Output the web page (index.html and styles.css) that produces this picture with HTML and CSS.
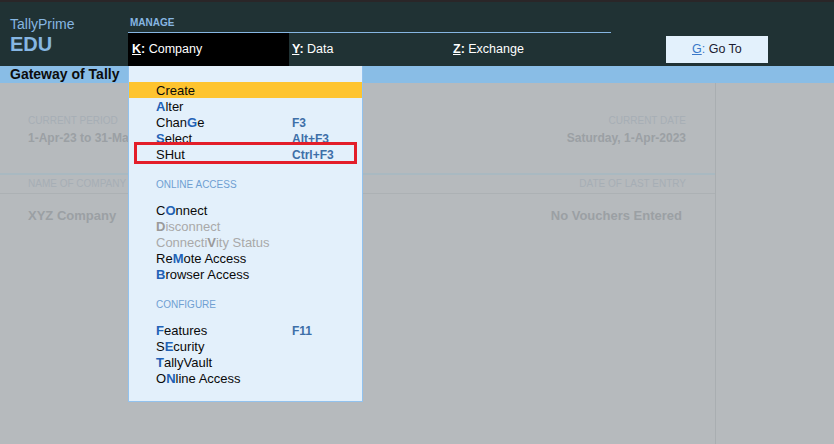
FILE: index.html
```html
<!DOCTYPE html>
<html lang="en">
<head>
    <meta charset="UTF-8">
    <meta name="viewport" content="width=device-width, initial-scale=1.0">
    <title>TallyPrime EDU - Gateway of Tally</title>
    <link rel="stylesheet" href="styles.css">
</head>
<body>
    <div class="top-strip"></div>

    <header class="topbar">
        <div class="brand">
            <div class="product">TallyPrime</div>
            <div class="edition">EDU</div>
        </div>
        <nav class="menubar">
            <div class="menu-title">MANAGE</div>
            <div class="tabs">
                <div class="tab active"><b><u>K</u>:</b> Company</div>
                <div class="tab"><b><u>Y</u>:</b> Data</div>
                <div class="tab"><b><u>Z</u>:</b> Exchange</div>
            </div>
        </nav>
        <div class="goto"><span class="goto-key"><u>G</u>:</span> Go To</div>
    </header>

    <div class="titlebar">Gateway of Tally</div>

    <main class="workspace">
        <section class="gateway">
            <div class="info-row">
                <div class="field">
                    <div class="label">CURRENT PERIOD</div>
                    <div class="value">1-Apr-23 to 31-Mar-24</div>
                </div>
                <div class="field right">
                    <div class="label">CURRENT DATE</div>
                    <div class="value">Saturday, 1-Apr-2023</div>
                </div>
            </div>
            <div class="info-head">
                <div class="label">NAME OF COMPANY</div>
                <div class="label">DATE OF LAST ENTRY</div>
            </div>
            <div class="info-body">
                <div class="value big">XYZ Company</div>
                <div class="value big">No Vouchers Entered</div>
            </div>
        </section>
        <aside class="side"></aside>
    </main>

    <div class="dropdown">
        <div class="item selected"><span>Create</span><span></span></div>
        <div class="item"><span><b class="k">A</b>lter</span><span></span></div>
        <div class="item"><span>Chan<b class="k">G</b>e</span><span class="sc">F3</span></div>
        <div class="item"><span><b class="k">S</b>elect</span><span class="sc">Alt+F3</span></div>
        <div class="item"><span>SHut</span><span class="sc">Ctrl+F3</span></div>

        <div class="group">ONLINE ACCESS</div>
        <div class="item"><span>C<b class="k">O</b>nnect</span><span></span></div>
        <div class="item disabled"><span><b class="k">D</b>isconnect</span><span></span></div>
        <div class="item disabled"><span>Connecti<b class="k">V</b>ity Status</span><span></span></div>
        <div class="item"><span>Re<b class="k">M</b>ote Access</span><span></span></div>
        <div class="item"><span><b class="k">B</b>rowser Access</span><span></span></div>

        <div class="group">CONFIGURE</div>
        <div class="item"><span><b class="k">F</b>eatures</span><span class="sc">F11</span></div>
        <div class="item"><span>S<b class="k">E</b>curity</span><span></span></div>
        <div class="item"><span><b class="k">T</b>allyVault</span><span></span></div>
        <div class="item"><span>O<b class="k">N</b>line Access</span><span></span></div>

        <div class="mark"></div>
    </div>
</body>
</html>
```

FILE: styles.css
```css
body {
    font-family: "Liberation Sans", Arial, sans-serif;
    margin: 0;
    padding: 0;
    width: 834px;
    height: 444px;
    overflow: hidden;
    background-color: #b6babd;
    position: relative;
}
.top-strip {
    height: 2px;
    background-color: #2a2628;
}
.topbar {
    display: flex;
    height: 64px;
    background-color: #203234;
}
.brand {
    width: 118px;
    padding: 14px 0 0 10px;
    color: #86b6e2;
}
.product {
    font-size: 14px;
    line-height: 16px;
}
.edition {
    font-size: 20px;
    font-weight: bold;
    line-height: 22px;
    margin-top: 1px;
}
.menubar {
    width: 483px;
}
.menu-title {
    box-sizing: border-box;
    height: 31px;
    padding: 15px 0 0 2px;
    font-size: 10px;
    line-height: 12px;
    font-weight: bold;
    color: #86b6e2;
    border-bottom: 1px solid #86b6e2;
}
.tabs {
    display: flex;
    height: 33px;
}
.tab {
    width: 161px;
    padding-left: 3px;
    box-sizing: border-box;
    color: #fff;
    font-size: 12.5px;
    line-height: 33px;
}
.tab.active {
    background-color: #000;
    padding-left: 4px;
}
.goto {
    margin: 34px 0 0 55px;
    width: 102px;
    height: 27px;
    box-sizing: border-box;
    padding-left: 26px;
    background-color: #e3f1fc;
    color: #1c1c30;
    font-size: 12.5px;
    line-height: 27px;
}
.goto-key {
    color: #3a78c8;
}
.titlebar {
    height: 17px;
    padding-left: 10px;
    background-color: #89bde6;
    font-size: 14px;
    font-weight: bold;
    line-height: 17px;
    color: #0c0c0c;
}
.workspace {
    display: flex;
    height: 361px;
}
.gateway {
    width: 715px;
    border-right: 1px solid #a9aeb1;
}
.side {
    flex: 1;
}
.label {
    font-size: 10px;
    line-height: 12px;
    color: #a6aeb5;
}
.value {
    font-size: 12px;
    font-weight: bold;
    line-height: 15px;
    color: #9ba0a4;
}
.value.big {
    font-size: 13px;
    line-height: 16px;
}
.info-row {
    display: flex;
    justify-content: space-between;
    padding: 32px 29px 0 28px;
    height: 58px;
}
.field .value {
    margin-top: 4px;
}
.field.right {
    text-align: right;
}
.info-head {
    display: flex;
    justify-content: space-between;
    align-items: center;
    height: 18px;
    padding: 0 29px 0 28px;
    border-top: 2px solid #a9b9c1;
    border-bottom: 1px solid #acb1b4;
}
.info-body {
    display: flex;
    justify-content: space-between;
    padding: 14px 33px 0 28px;
}
.dropdown {
    position: absolute;
    left: 128px;
    top: 66px;
    width: 235px;
    box-sizing: border-box;
    padding: 16px 0 15px 0;
    background-color: #e3f0fb;
    border: 1px solid #92c2ee;
    border-top: 0;
}
.item {
    display: grid;
    grid-template-columns: 136px 1fr;
    height: 16px;
    box-sizing: border-box;
    padding: 1px 0 0 27px;
    font-size: 13px;
    line-height: 16px;
    color: #0a0a0a;
}
.item.selected {
    background-color: #fec42f;
}
.item.disabled {
    color: #a9a9a9;
}
.k {
    color: #2262b6;
}
.item.disabled .k {
    color: #9a9a9a;
}
.sc {
    font-size: 12px;
    font-weight: bold;
    color: #3e6fa8;
}
.group {
    margin: 17px 0 11px 0;
    padding-left: 27px;
    font-size: 10px;
    line-height: 12px;
    color: #6f9fd2;
}
.mark {
    position: absolute;
    left: 5px;
    top: 76px;
    width: 223px;
    height: 22px;
    box-sizing: border-box;
    border: 3px solid #e31e2a;
}
```
